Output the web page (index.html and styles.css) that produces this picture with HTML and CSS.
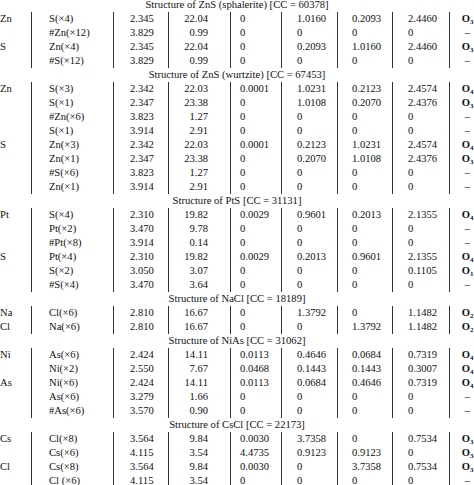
FILE: index.html
```html
<!DOCTYPE html>
<html lang="en">
<head>
<meta charset="utf-8">
<title>Bond structures</title>
<link rel="stylesheet" href="styles.css">
</head>
<body>
<table class="bonds">
<colgroup>
<col class="c-atom"><col class="c-nb"><col class="c-d"><col class="c-p"><col class="c-a"><col class="c-b"><col class="c-c"><col class="c-e"><col class="c-o">
</colgroup>
<tbody>
<tr class="title"><td colspan="9">Structure of ZnS (sphalerite) [CC = 60378]</td></tr>
<tr><td class="atom">Zn</td><td>S(×4)</td><td>2.345</td><td>22.04</td><td>0</td><td>1.0160</td><td>0.2093</td><td>2.4460</td><td><b>O<sub>3</sub></b></td></tr>
<tr><td class="atom"></td><td>#Zn(×12)</td><td>3.829</td><td>0.99</td><td>0</td><td>0</td><td>0</td><td>0</td><td>–</td></tr>
<tr><td class="atom">S</td><td>Zn(×4)</td><td>2.345</td><td>22.04</td><td>0</td><td>0.2093</td><td>1.0160</td><td>2.4460</td><td><b>O<sub>3</sub></b></td></tr>
<tr><td class="atom"></td><td>#S(×12)</td><td>3.829</td><td>0.99</td><td>0</td><td>0</td><td>0</td><td>0</td><td>–</td></tr>

<tr class="title"><td colspan="9">Structure of ZnS (wurtzite) [CC = 67453]</td></tr>
<tr><td class="atom">Zn</td><td>S(×3)</td><td>2.342</td><td>22.03</td><td>0.0001</td><td>1.0231</td><td>0.2123</td><td>2.4574</td><td><b>O<sub>4</sub></b></td></tr>
<tr><td class="atom"></td><td>S(×1)</td><td>2.347</td><td>23.38</td><td>0</td><td>1.0108</td><td>0.2070</td><td>2.4376</td><td><b>O<sub>3</sub></b></td></tr>
<tr><td class="atom"></td><td>#Zn(×6)</td><td>3.823</td><td>1.27</td><td>0</td><td>0</td><td>0</td><td>0</td><td>–</td></tr>
<tr><td class="atom"></td><td>S(×1)</td><td>3.914</td><td>2.91</td><td>0</td><td>0</td><td>0</td><td>0</td><td>–</td></tr>
<tr><td class="atom">S</td><td>Zn(×3)</td><td>2.342</td><td>22.03</td><td>0.0001</td><td>0.2123</td><td>1.0231</td><td>2.4574</td><td><b>O<sub>4</sub></b></td></tr>
<tr><td class="atom"></td><td>Zn(×1)</td><td>2.347</td><td>23.38</td><td>0</td><td>0.2070</td><td>1.0108</td><td>2.4376</td><td><b>O<sub>3</sub></b></td></tr>
<tr><td class="atom"></td><td>#S(×6)</td><td>3.823</td><td>1.27</td><td>0</td><td>0</td><td>0</td><td>0</td><td>–</td></tr>
<tr><td class="atom"></td><td>Zn(×1)</td><td>3.914</td><td>2.91</td><td>0</td><td>0</td><td>0</td><td>0</td><td>–</td></tr>

<tr class="title"><td colspan="9">Structure of PtS [CC = 31131]</td></tr>
<tr><td class="atom">Pt</td><td>S(×4)</td><td>2.310</td><td>19.82</td><td>0.0029</td><td>0.9601</td><td>0.2013</td><td>2.1355</td><td><b>O<sub>4</sub></b></td></tr>
<tr><td class="atom"></td><td>Pt(×2)</td><td>3.470</td><td>9.78</td><td>0</td><td>0</td><td>0</td><td>0</td><td>–</td></tr>
<tr><td class="atom"></td><td>#Pt(×8)</td><td>3.914</td><td>0.14</td><td>0</td><td>0</td><td>0</td><td>0</td><td>–</td></tr>
<tr><td class="atom">S</td><td>Pt(×4)</td><td>2.310</td><td>19.82</td><td>0.0029</td><td>0.2013</td><td>0.9601</td><td>2.1355</td><td><b>O<sub>4</sub></b></td></tr>
<tr><td class="atom"></td><td>S(×2)</td><td>3.050</td><td>3.07</td><td>0</td><td>0</td><td>0</td><td>0.1105</td><td><b>O<sub>1</sub></b></td></tr>
<tr><td class="atom"></td><td>#S(×4)</td><td>3.470</td><td>3.64</td><td>0</td><td>0</td><td>0</td><td>0</td><td>–</td></tr>

<tr class="title"><td colspan="9">Structure of NaCl [CC = 18189]</td></tr>
<tr><td class="atom">Na</td><td>Cl(×6)</td><td>2.810</td><td>16.67</td><td>0</td><td>1.3792</td><td>0</td><td>1.1482</td><td><b>O<sub>2</sub></b></td></tr>
<tr><td class="atom">Cl</td><td>Na(×6)</td><td>2.810</td><td>16.67</td><td>0</td><td>0</td><td>1.3792</td><td>1.1482</td><td><b>O<sub>2</sub></b></td></tr>

<tr class="title"><td colspan="9">Structure of NiAs [CC = 31062]</td></tr>
<tr><td class="atom">Ni</td><td>As(×6)</td><td>2.424</td><td>14.11</td><td>0.0113</td><td>0.4646</td><td>0.0684</td><td>0.7319</td><td><b>O<sub>4</sub></b></td></tr>
<tr><td class="atom"></td><td>Ni(×2)</td><td>2.550</td><td>7.67</td><td>0.0468</td><td>0.1443</td><td>0.1443</td><td>0.3007</td><td><b>O<sub>4</sub></b></td></tr>
<tr><td class="atom">As</td><td>Ni(×6)</td><td>2.424</td><td>14.11</td><td>0.0113</td><td>0.0684</td><td>0.4646</td><td>0.7319</td><td><b>O<sub>4</sub></b></td></tr>
<tr><td class="atom"></td><td>As(×6)</td><td>3.279</td><td>1.66</td><td>0</td><td>0</td><td>0</td><td>0</td><td>–</td></tr>
<tr><td class="atom"></td><td>#As(×6)</td><td>3.570</td><td>0.90</td><td>0</td><td>0</td><td>0</td><td>0</td><td>–</td></tr>

<tr class="title"><td colspan="9">Structure of CsCl [CC = 22173]</td></tr>
<tr><td class="atom">Cs</td><td>Cl(×8)</td><td>3.564</td><td>9.84</td><td>0.0030</td><td>3.7358</td><td>0</td><td>0.7534</td><td><b>O<sub>3</sub></b></td></tr>
<tr><td class="atom"></td><td>Cs(×6)</td><td>4.115</td><td>3.54</td><td>4.4735</td><td>0.9123</td><td>0.9123</td><td>0</td><td><b>O<sub>3</sub></b></td></tr>
<tr><td class="atom">Cl</td><td>Cs(×8)</td><td>3.564</td><td>9.84</td><td>0.0030</td><td>0</td><td>3.7358</td><td>0.7534</td><td><b>O<sub>3</sub></b></td></tr>
<tr><td class="atom"></td><td>Cl (×6)</td><td>4.115</td><td>3.54</td><td>0</td><td>0</td><td>0</td><td>0</td><td>–</td></tr>
</tbody>
</table>
</body>
</html>
```

FILE: styles.css
```css
html, body {
  margin: 0;
  padding: 0;
  background: #fff;
  overflow: hidden;
}

.bonds {
  margin-top: -2px;
  width: 485px;
  table-layout: fixed;
  border-collapse: separate;
  border-spacing: 0;
  font-family: "Liberation Serif", "Times New Roman", serif;
  font-size: 10.6px;
  color: #111;
}

.c-atom { width: 31px; }
.c-nb { width: 82px; }
.c-d { width: 55px; }
.c-p { width: 62px; }
.c-a { width: 51px; }
.c-b { width: 56px; }
.c-c { width: 55px; }
.c-e { width: 57px; }
.c-o { width: 36px; }

.bonds td {
  height: 14px;
  line-height: 14px;
  padding: 0;
  white-space: nowrap;
  overflow: visible;
  vertical-align: middle;
  box-sizing: border-box;
  border-left: 1px solid #333;
}

.bonds td.atom {
  border-left: none;
  padding-left: 0;
}

.bonds td:nth-child(2) { padding-left: 17px; }
.bonds td:nth-child(3) { padding-left: 16px; }
.bonds td:nth-child(4) { text-align: right; padding-right: 22px; }
.bonds td:nth-child(5) { padding-left: 9px; }
.bonds td:nth-child(6) { padding-left: 15px; }
.bonds td:nth-child(7) { padding-left: 14px; }
.bonds td:nth-child(8) { padding-left: 15px; }
.bonds td:nth-child(9) { text-align: center; }

.bonds tr.title td {
  border-left: none;
  text-align: center;
  padding: 0 11px 0 0;
}

.bonds b {
  font-weight: bold;
}

.bonds sub {
  font-size: 7px;
  line-height: 0;
  vertical-align: -2px;
}
```
